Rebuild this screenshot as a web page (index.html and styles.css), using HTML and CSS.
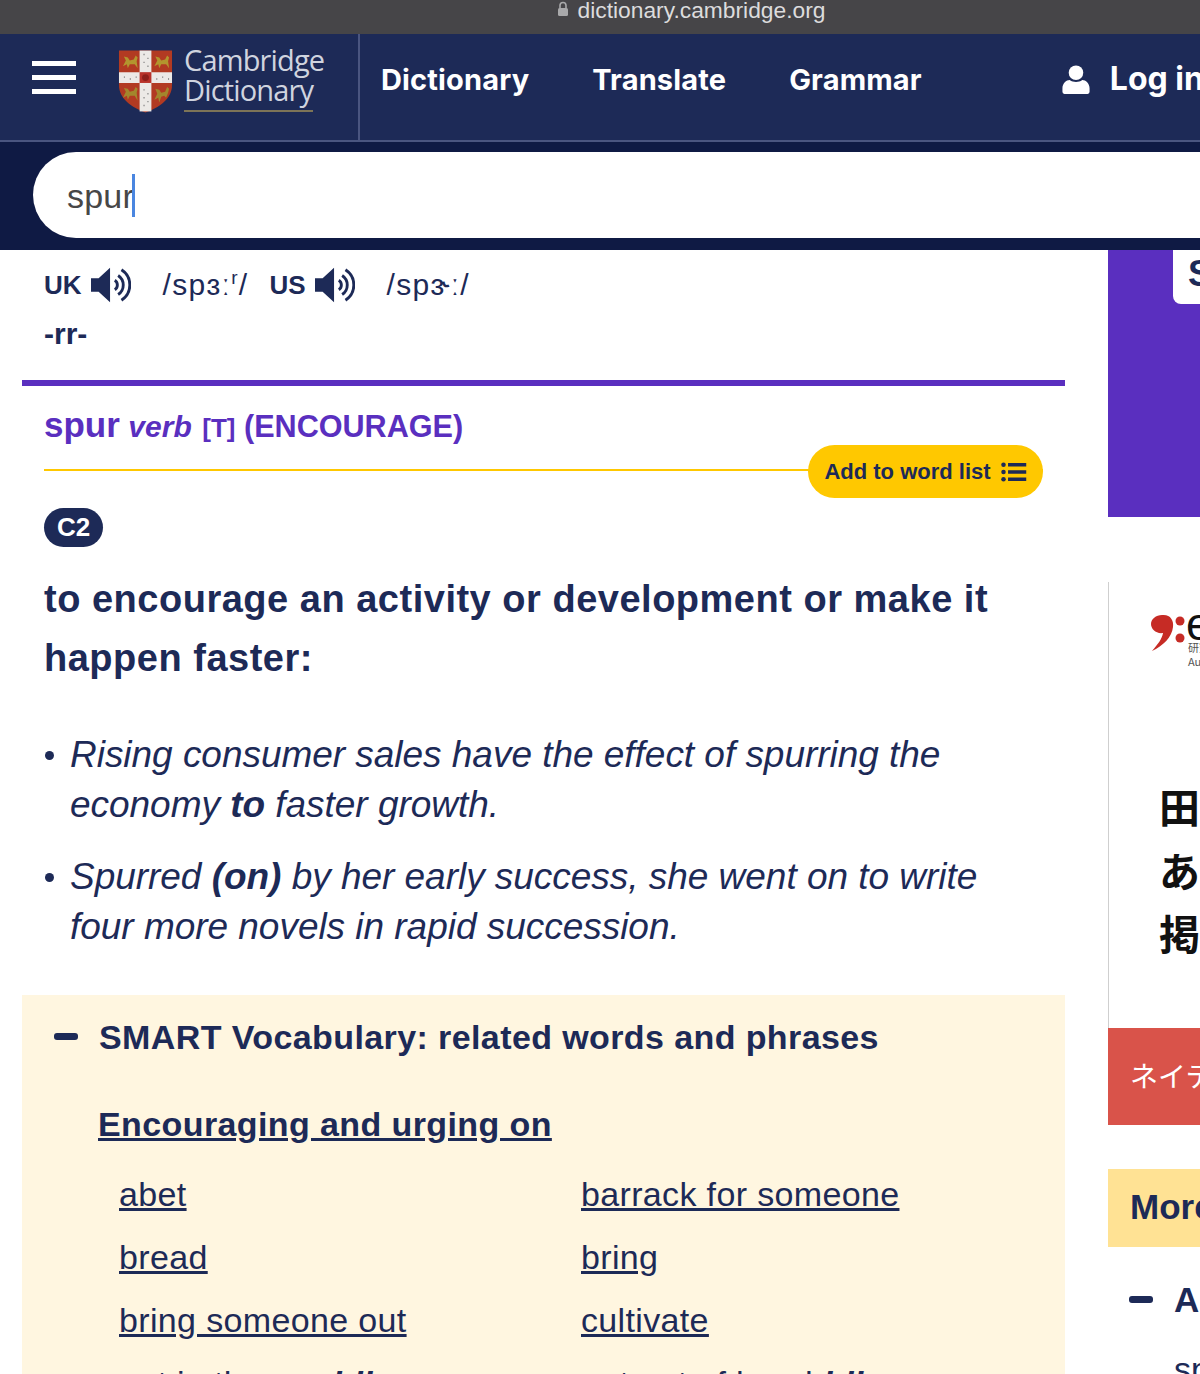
FILE: index.html
```html
<!DOCTYPE html>
<html lang="en">
<head>
<meta charset="utf-8">
<title>spur | Cambridge Dictionary</title>
<link rel="stylesheet" href="styles.css">
</head>
<body>
<div class="page">
  <div class="urlbar">
    <svg class="lock" viewBox="0 0 12 16"><path d="M3 7V4.500a3 3 0 0 1 6 0V7" fill="none" stroke="#a9a9ab" stroke-width="1.600"/><rect x="1" y="7" width="10" height="8" rx="1.500" fill="#a9a9ab"/></svg>
    <span>dictionary.cambridge.org</span>
  </div>
  <header class="topnav">
    <div class="brand">
      <div class="burger"><i></i><i></i><i></i></div>
      <svg class="shield" viewBox="0 0 56 64">
        <path d="M1 1H55V36C55 50 42 59 28 64C14 59 1 50 1 36Z" fill="#b23a22"/>
        <path d="M22 1H34V63H22Z" fill="#ece9e6"/>
        <path d="M1 23H55V34H1Z" fill="#ece9e6"/>
        <path d="M22 23H34V34H22Z" fill="#b8322a"/>
        <circle cx="28" cy="28.500" r="3.500" fill="#8c1f1a"/>
        <path d="M5 17L8 11L6 7L10 8L12 11L16 10L18 6L20 8L19 12L20 19L17 15L12 15L10 19L9 15Z" fill="#b3952e"/>
        <path d="M37 17L40 11L38 7L42 8L44 11L48 10L50 6L52 8L51 12L52 19L49 15L44 15L42 19L41 15Z" fill="#b3952e"/>
        <path d="M5 49L8 43L6 39L10 40L12 43L16 42L18 38L20 40L19 44L20 52L17 47L12 47L10 51L9 47Z" fill="#a3862c"/>
        <path d="M37 51L40 45L38 40L42 41L44 44L48 43L50 38L52 40L51 44L49 49L47 47L44 48L42 54L41 49Z" fill="#a3862c"/>
        <path d="M26 5h1M30 9h1M26 13h1M30 17h1M26 41h1M30 45h1M26 49h1M30 53h1M26 57h1M6 28h1M12 30h1M18 28h1M39 30h1M45 28h1M51 30h1" stroke="#6f6f6f" stroke-width="1.400"/>
      </svg>
      <div class="wordmark"><span>Cambridge</span><span>Dictionary</span></div>
    </div>
    <nav class="menu">
      <a>Dictionary</a><a>Translate</a><a>Grammar</a>
    </nav>
    <div class="login">
      <svg class="user" viewBox="0 0 28 32"><circle cx="14" cy="8" r="7.500" fill="#fff"/><path d="M2 30a2.500 2.500 0 0 1-2-2.500V24c0-5 4-8.500 7.500-8.500 2 1.500 4 2 6.500 2s4.500-.5 6.500-2C24 15.500 28 19 28 24v3.500a2.500 2.500 0 0 1-2 2.500Z" fill="#fff"/></svg>
      <span>Log in</span>
    </div>
  </header>
  <div class="searchband">
    <div class="searchbox"><span class="query">spur</span><i class="caret"></i></div>
  </div>
  <div class="columns">
    <main class="entry">
      <div class="pron">
        <b>UK</b>
        <svg class="speaker" viewBox="0 0 42 36"><path d="M0 11H8L20 0V36L8 25H0Z" fill="#1d2a57"/><path d="M25 13a6 6 0 0 1 0 10M28.500 8a12 12 0 0 1 0 20M32 2a19 19 0 0 1 0 32" fill="none" stroke="#1d2a57" stroke-width="3"/></svg>
        <span class="ipa">/spɜː<sup>r</sup>/</span>
        <b class="us">US</b>
        <svg class="speaker" viewBox="0 0 42 36"><path d="M0 11H8L20 0V36L8 25H0Z" fill="#1d2a57"/><path d="M25 13a6 6 0 0 1 0 10M28.500 8a12 12 0 0 1 0 20M32 2a19 19 0 0 1 0 32" fill="none" stroke="#1d2a57" stroke-width="3"/></svg>
        <span class="ipa">/spɝː/</span>
      </div>
      <div class="forms">-rr-</div>
      <h2 class="sense"><span>spur</span> <em>verb</em> <small>[T]</small> (ENCOURAGE)</h2>
      <div class="wordlist-row">
        <a class="wordlist">Add to word list
          <svg class="listicon" viewBox="0 0 28 22"><circle cx="3" cy="3" r="2.500"/><circle cx="3" cy="11" r="2.500"/><circle cx="3" cy="19" r="2.500"/><path d="M8 1h20v4H8zM8 9h20v4H8zM8 17h20v4H8z"/></svg>
        </a>
      </div>
      <span class="level">C2</span>
      <p class="definition">to encourage an activity or development or make it happen faster:</p>
      <ul class="examples">
        <li><em>Rising consumer sales have the effect of spurring the economy <b>to</b> faster growth.</em></li>
        <li><em>Spurred <b>(on)</b> by her early success, she went on to write four more novels in rapid succession.</em></li>
      </ul>
      <section class="smart">
        <h3 class="smart-title"><i class="minus"></i>SMART Vocabulary: related words and phrases</h3>
        <a class="smart-topic">Encouraging and urging on</a>
        <div class="smart-words">
          <a>abet</a><a>barrack for someone</a>
          <a>bread</a><a>bring</a>
          <a>bring someone out</a><a>cultivate</a>
          <a>get in the run <span class="idiom">idiom</span></a><a>get out of hand <span class="idiom">idiom</span></a>
        </div>
      </section>
    </main>
    <aside class="side">
      <div class="promo"><div class="promo-card">Sign</div></div>
      <div class="ad">
        <div class="ad-logo">
          <svg class="ad-mark" viewBox="0 0 34 38"><path d="M11 1C19 0 23 6 22 13C21 23 12 32 1 37C7 30 11 25 12 19C5 20 0 15 0 10C0 5 5 1 11 1Z" fill="#c62b25"/><circle cx="29" cy="7" r="4.500" fill="#c62b25"/><circle cx="29" cy="24" r="4.500" fill="#c62b25"/></svg>
          <span class="ad-e">e</span>
          <span class="ad-sub">研究<br>Au</span>
        </div>
        <div class="ad-copy">田中<br>あり<br>掲載</div>
      </div>
      <div class="ad-foot">ネイティブ</div>
      <div class="more-box">More examples</div>
      <div class="acc"><i class="minus"></i>Antonyms</div>
      <div class="acc-sub">spur</div>
    </aside>
  </div>
</div>
</body>
</html>
```
FILE: styles.css
```css
* { box-sizing: border-box; }
html, body { margin: 0; padding: 0; }
body { font-family: "Liberation Sans", Arial, sans-serif; color: #1d2a57; background: #fff; }
.page { width: 1200px; height: 1374px; overflow: hidden; }

.urlbar { height: 34px; background: #464548; color: #dcdcdd; display: flex; justify-content: center; align-items: flex-start; gap: 9px; font-size: 22.800px; line-height: 20px; padding-left: 182px; }
.lock { width: 12px; height: 16px; margin-top: 1px; }

.topnav { height: 108px; background: #1d2a57; border-bottom: 2px solid #4a5580; display: flex; width: 1300px; }
.brand { width: 360px; border-right: 2px solid #4a5580; display: flex; align-items: flex-start; flex: none; }
.burger { width: 44px; margin: 27px 0 0 32px; display: flex; flex-direction: column; gap: 9px; }
.burger i { display: block; height: 5px; background: #fff; }
.shield { width: 55px; height: 64px; margin: 15px 0 0 42px; flex: none; }
.wordmark { margin: 11px 0 0 11px; display: flex; flex-direction: column; font-family: "Open Sans", sans-serif; font-size: 29px; line-height: 30px; letter-spacing: -.85px; color: #d0d4df; padding-bottom: 5px; }
.wordmark span:last-child { border-bottom: 2px solid #7d7457; width: 129px; padding-bottom: 5px; white-space: nowrap; }
.menu { display: flex; gap: 63px; padding: 27px 0 0 21px; line-height: 38px; font-weight: 700; color: #fff; font-family: Inter, "Liberation Sans", sans-serif; font-size: 29px; letter-spacing: .15px; flex: none; }
.login { display: flex; align-items: flex-start; margin-left: 140px; color: #fff; font-family: Inter, "Liberation Sans", sans-serif; font-weight: 700; font-size: 32px; line-height: 38px; padding-top: 26px; flex: none; gap: 20px; white-space: nowrap; }
.user { width: 28px; height: 31px; margin-top: 5px; }

.searchband { height: 108px; background: #0f1a44; padding: 10px 0 12px 33px; }
.searchbox { width: 1300px; height: 86px; background: #fff; border-radius: 43px 0 0 43px; display: flex; align-items: center; padding: 3px 0 0 34px; }
.query { font-size: 34px; color: #474747; letter-spacing: .2px; }
.caret { width: 3px; height: 43px; background: #4a86e0; margin-left: -2px; margin-top: -2px; }

.columns { display: flex; height: 1124px; }
.entry { width: 1043px; margin-left: 22px; flex: none; }
.pron { display: flex; align-items: center; height: 70px; padding: 0 0 0 22px; }
.pron b { font-size: 26px; }
.speaker { width: 40px; height: 36px; margin-left: 9px; }
.ipa { font-size: 30px; margin-left: 32px; letter-spacing: 1.300px; }
.ipa sup { font-size: 19px; line-height: 0; }
.pron .us { margin-left: 21px; }
.forms { font-size: 30px; font-weight: 700; line-height: 28px; padding-left: 22px; height: 66px; border-bottom: 6px solid #5a2fbf; }
.sense { margin: 0; padding: 17px 0 0 22px; font-size: 30.600px; line-height: 44px; color: #5a2fbf; font-weight: 700; }
.sense span { font-size: 35px; }
.sense em { font-size: 30px; margin-right: 2px; }
.sense small { font-size: 26px; font-weight: 700; }
.wordlist-row { height: 53px; margin: -5px 22px 0 22px; display: flex; justify-content: flex-end; background: linear-gradient(#ffc800, #ffc800) 0 24px / 100% 2px no-repeat; }
.wordlist { height: 53px; width: 235px; background: #ffc800; border-radius: 27px; display: flex; align-items: center; justify-content: center; gap: 9px; font-size: 22px; font-weight: 700; color: #1d2a57; }
.listicon { width: 27px; height: 20px; fill: #1d2a57; }
.level { display: block; width: 59px; height: 39px; margin: 10px 0 0 22px; background: #1d2a57; color: #fff; border-radius: 20px; font-size: 26px; font-weight: 700; line-height: 39px; text-align: center; }
.definition { margin: 23px 0 0 22px; width: 990px; font-size: 38px; line-height: 59px; font-weight: 700; letter-spacing: .51px; }
.examples { list-style: none; margin: 42px 0 0; padding: 0 0 0 48px; width: 1000px; font-size: 37px; line-height: 50px; }
.examples li { position: relative; margin-bottom: 22px; letter-spacing: -.03px; }
.examples li::before { content: ""; position: absolute; left: -25px; top: 21px; width: 9px; height: 9px; border-radius: 50%; background: #1d2a57; }
.smart { margin-top: 43px; background: #fff6e0; height: 400px; padding: 21px 0 0 77px; position: relative; }
.smart-title { margin: 0; font-size: 34px; line-height: 42px; font-weight: 700; letter-spacing: .4px; }
.minus { position: absolute; left: 32px; top: 38px; width: 24px; height: 7px; border-radius: 3px; background: #1d2a57; }
.smart-topic { display: block; margin: 45px 0 0 -1px; font-size: 34px; line-height: 42px; font-weight: 700; text-decoration: underline; letter-spacing: .4px; }
.smart-words { display: grid; grid-template-columns: 462px 1fr; margin: 18px 0 0 20px; font-size: 34px; line-height: 63px; letter-spacing: .35px; }
.smart-words a { text-decoration: underline; }
.idiom { font-style: italic; font-weight: 700; }

.side { margin-left: 43px; width: 92px; flex: none; overflow: hidden; }
.promo { height: 267px; background: #5a2fbf; position: relative; }
.promo-card { position: absolute; left: 65px; top: 0; width: 120px; height: 54px; background: #fff; border-radius: 0 0 0 8px; font-size: 36px; font-weight: 700; padding: 2px 0 0 15px; line-height: 44px; }
.ad { margin-top: 65px; height: 446px; border-left: 1px solid #cfcfcf; width: 200px; padding-left: 42px; color: #111; font-family: "Noto Sans CJK JP", sans-serif; }
.ad-logo { height: 110px; padding-top: 32px; white-space: nowrap; position: relative; display: flex; align-items: flex-start; }
.ad-mark { width: 34px; height: 38px; flex: none; }
.ad-e { font-size: 46px; line-height: 40px; margin-left: 1px; margin-top: -10px; font-family: "Liberation Sans", sans-serif; }
.ad-sub { position: absolute; left: 37px; top: 58px; font-size: 11px; line-height: 14px; color: #555; }
.ad-copy { margin: 82px 0 0 8px; font-size: 41px; font-weight: 700; line-height: 63.500px; white-space: nowrap; }
.ad-foot { height: 97px; background: #d9534a; color: #fff; font-family: "Noto Sans CJK JP", sans-serif; font-size: 28px; line-height: 94px; padding-left: 22px; white-space: nowrap; overflow: hidden; }
.more-box { margin-top: 44px; height: 78px; background: #ffe294; font-size: 35px; font-weight: 700; line-height: 76px; padding-left: 22px; white-space: nowrap; }
.acc { position: relative; margin-top: 32px; padding-left: 66px; font-size: 35px; font-weight: 700; line-height: 42px; white-space: nowrap; }
.acc .minus { left: 21px; top: 17px; }
.acc-sub { margin-top: 28px; padding-left: 66px; font-size: 34px; line-height: 40px; }
```
